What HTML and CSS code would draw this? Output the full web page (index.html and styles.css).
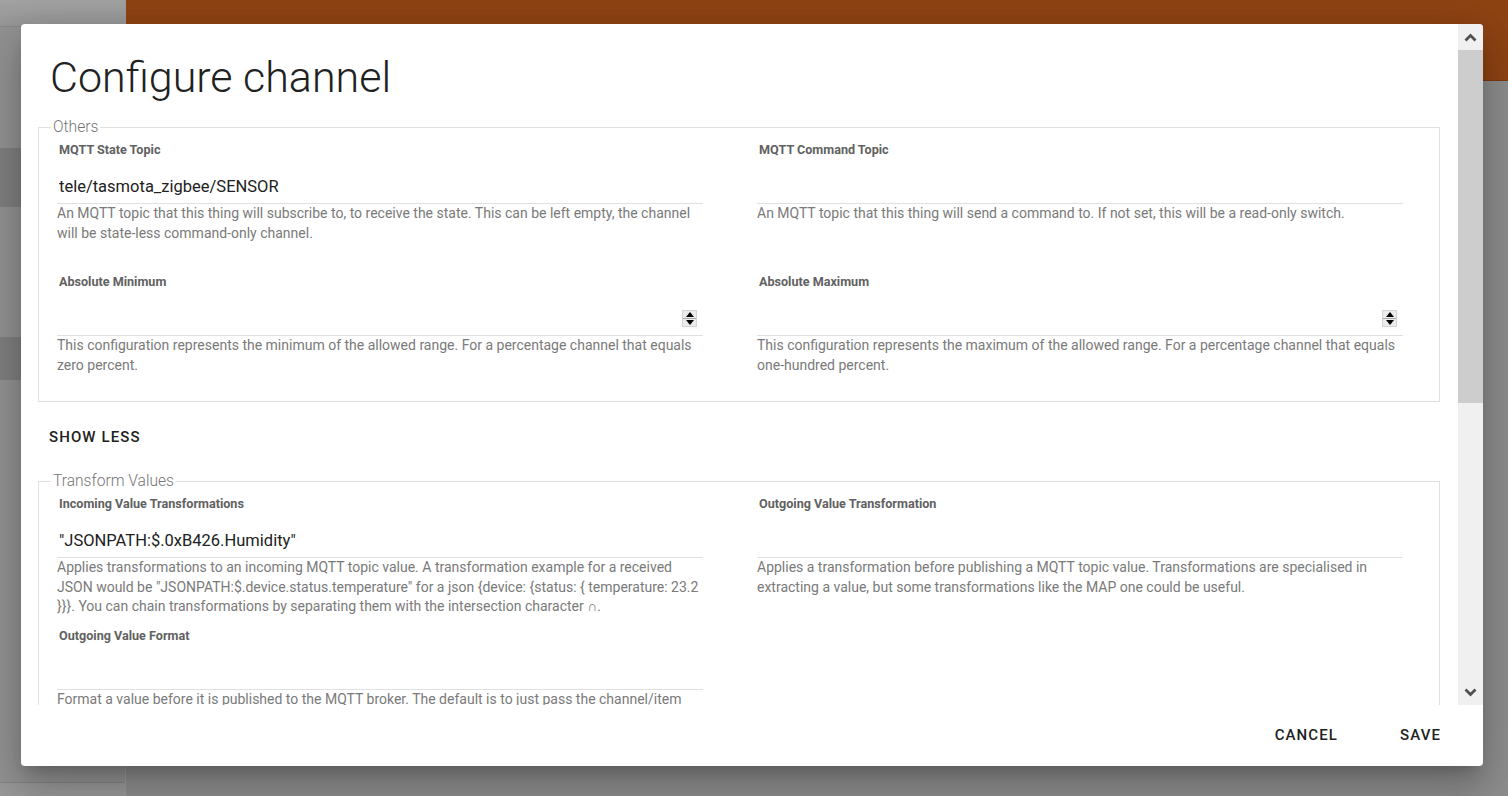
FILE: index.html
```html
<!DOCTYPE html>
<html lang="en">
<head>
    <meta charset="UTF-8">
    <title>Configure channel</title>
    <link rel="stylesheet" href="styles.css">
</head>
<body>
    <div class="page">
        <aside class="sidebar">
            <div class="side-top"></div>
            <div class="side-gap gap-1"></div>
            <div class="side-band band-1"></div>
            <div class="side-gap gap-2"></div>
            <div class="side-band band-2"></div>
            <div class="side-gap gap-3"></div>
            <div class="side-foot"></div>
        </aside>
        <main class="main">
            <div class="main-header"></div>
        </main>
    </div>

    <div class="dialog">
        <div class="dialog-body">
            <div class="dialog-content">
                <h1 class="dialog-title">Configure channel</h1>

                <fieldset class="group">
                    <legend>Others</legend>
                    <div class="fields">
                        <div class="field">
                            <label class="field-label">MQTT State Topic</label>
                            <div class="input-wrap">
                                <input class="field-input" type="text" value="tele/tasmota_zigbee/SENSOR">
                            </div>
                            <div class="field-hint">An MQTT topic that this thing will subscribe to, to receive the state. This can be left empty, the channel will be state-less command-only channel.</div>
                        </div>
                        <div class="field">
                            <label class="field-label">MQTT Command Topic</label>
                            <div class="input-wrap">
                                <input class="field-input" type="text" value="">
                            </div>
                            <div class="field-hint">An MQTT topic that this thing will send a command to. If not set, this will be a read-only switch.</div>
                        </div>
                        <div class="field">
                            <label class="field-label">Absolute Minimum</label>
                            <div class="input-wrap">
                                <input class="field-input" type="text" value="">
                                <span class="spinner"><span class="spin-up"></span><span class="spin-down"></span></span>
                            </div>
                            <div class="field-hint">This configuration represents the minimum of the allowed range. For a percentage channel that equals zero percent.</div>
                        </div>
                        <div class="field">
                            <label class="field-label">Absolute Maximum</label>
                            <div class="input-wrap">
                                <input class="field-input" type="text" value="">
                                <span class="spinner"><span class="spin-up"></span><span class="spin-down"></span></span>
                            </div>
                            <div class="field-hint">This configuration represents the maximum of the allowed range. For a percentage channel that equals one-hundred percent.</div>
                        </div>
                    </div>
                </fieldset>

                <button class="show-less">SHOW LESS</button>

                <fieldset class="group">
                    <legend>Transform Values</legend>
                    <div class="fields">
                        <div class="field">
                            <label class="field-label">Incoming Value Transformations</label>
                            <div class="input-wrap">
                                <input class="field-input" type="text" value="&quot;JSONPATH:$.0xB426.Humidity&quot;">
                            </div>
                            <div class="field-hint">Applies transformations to an incoming MQTT topic value. A transformation example for a received JSON would be "JSONPATH:$.device.status.temperature" for a json {device: {status: { temperature: 23.2 }}}. You can chain transformations by separating them with the intersection character ∩.</div>
                        </div>
                        <div class="field">
                            <label class="field-label">Outgoing Value Transformation</label>
                            <div class="input-wrap">
                                <input class="field-input" type="text" value="">
                            </div>
                            <div class="field-hint">Applies a transformation before publishing a MQTT topic value. Transformations are specialised in extracting a value, but some transformations like the MAP one could be useful.</div>
                        </div>
                        <div class="field">
                            <label class="field-label">Outgoing Value Format</label>
                            <div class="input-wrap">
                                <input class="field-input" type="text" value="">
                            </div>
                            <div class="field-hint">Format a value before it is published to the MQTT broker. The default is to just pass the channel/item state. If you want to apply a prefix, say "MYCOLOR,", you would use "MYCOLOR,%s".</div>
                        </div>
                    </div>
                </fieldset>
            </div>

            <div class="scrollbar">
                <div class="sb-button">
                    <svg width="13" height="9" viewBox="0 0 13 9"><polyline points="1.5,7.5 6.5,2.5 11.5,7.5" fill="none" stroke="#505050" stroke-width="2.8"/></svg>
                </div>
                <div class="sb-track"><div class="sb-thumb"></div></div>
                <div class="sb-button">
                    <svg width="13" height="9" viewBox="0 0 13 9"><polyline points="1.5,1.5 6.5,6.5 11.5,1.5" fill="none" stroke="#505050" stroke-width="2.8"/></svg>
                </div>
            </div>
        </div>

        <div class="dialog-actions">
            <button class="action-button">CANCEL</button>
            <button class="action-button">SAVE</button>
        </div>
    </div>
</body>
</html>
```

FILE: styles.css
```css
body {
    margin: 0;
    padding: 0;
    height: 796px;
    overflow: hidden;
    background-color: #8e8e8e;
    font-family: Roboto, "Noto Sans", Arial, sans-serif;
}
.page {
    display: flex;
    height: 796px;
}
.sidebar {
    width: 125px;
    display: flex;
    flex-direction: column;
    background-color: #939393;
    border-right: 1px solid #9c9c9c;
}
.side-top {
    height: 26px;
    background: linear-gradient(#a3a3a3, #979797);
    border-bottom: 1px solid #8a8a8a;
}
.gap-1 { height: 121px; }
.gap-2 { height: 130px; }
.gap-3 { flex-grow: 1; }
.band-1 { height: 59px; background-color: #808080; }
.band-2 { height: 43px; background-color: #808080; }
.side-foot {
    height: 13px;
    border-top: 1px solid #858585;
    background-color: #999;
}
.main {
    flex-grow: 1;
    background-color: #8e8e8e;
}
.main-header {
    height: 80px;
    background-color: #8f4313;
    border-bottom: 1px solid #7d3a10;
}

/* dialog */
.dialog {
    position: absolute;
    left: 21px;
    top: 24px;
    width: 1462px;
    height: 742px;
    background-color: #fff;
    border-radius: 4px;
    overflow: hidden;
    display: flex;
    flex-direction: column;
    box-shadow: 0 11px 15px -7px rgba(0, 0, 0, 0.2), 0 24px 38px 3px rgba(0, 0, 0, 0.14), 0 9px 46px 8px rgba(0, 0, 0, 0.12);
}
.dialog-body {
    flex-grow: 1;
    display: flex;
    min-height: 0;
}
.dialog-content {
    flex-grow: 1;
    min-width: 0;
    overflow: hidden;
    padding: 27px 18px 0 17px;
}
.dialog-title {
    margin: 0 0 0 12px;
    font-size: 43px;
    line-height: 52px;
    font-weight: 300;
    color: #212121;
}
.group {
    margin: 15px 0 0 0;
    padding: 6px 0 7px 0;
    border: 1px solid #e0e0e0;
    min-width: 0;
}
.group legend {
    margin-left: 12px;
    padding: 0 2px;
    font-size: 15.6px;
    line-height: 18px;
    font-weight: 300;
    color: #757575;
}
.fields {
    display: grid;
    grid-template-columns: 1fr 1fr;
    row-gap: 12px;
}
.field {
    min-width: 0;
    padding: 0 36px 0 18px;
}
.field-label {
    display: block;
    padding-left: 2px;
    margin-bottom: 15px;
    font-size: 12.6px;
    line-height: 16px;
    font-weight: bold;
    color: #616161;
}
.input-wrap {
    display: flex;
    align-items: center;
    height: 31px;
    padding-bottom: 3px;
    box-sizing: border-box;
    border-bottom: 1px solid #e0e0e0;
}
.field-input {
    flex-grow: 1;
    min-width: 0;
    height: 27px;
    padding: 0 2px;
    border: none;
    outline: none;
    background: transparent;
    font-family: inherit;
    font-size: 16.5px;
    color: #212121;
}
.spinner {
    width: 15px;
    height: 17px;
    margin: 0 6px 1px 0;
    display: flex;
    flex-direction: column;
    box-sizing: border-box;
    border: 1px solid #d4d4d4;
    background-color: #ececec;
}
.spin-up,
.spin-down {
    flex-grow: 1;
    display: flex;
    justify-content: center;
    align-items: center;
}
.spin-up { border-bottom: 1px solid #a8a8a8; }
.spin-up::after {
    content: "";
    border-left: 4px solid transparent;
    border-right: 4px solid transparent;
    border-bottom: 5px solid #000;
}
.spin-down::after {
    content: "";
    border-left: 4px solid transparent;
    border-right: 4px solid transparent;
    border-top: 5px solid #000;
}
.field-hint {
    height: 58px;
    font-size: 14px;
    line-height: 19.5px;
    color: #7a7a7a;
}
.show-less {
    display: block;
    height: 36px;
    margin: 17px 0;
    padding: 0 11px;
    border: none;
    background: none;
    font-family: inherit;
    font-size: 15px;
    font-weight: 500;
    letter-spacing: 1.1px;
    color: #212121;
}

/* scrollbar */
.scrollbar {
    flex-shrink: 0;
    width: 25px;
    display: flex;
    flex-direction: column;
    background-color: #f0f0f0;
}
.sb-button {
    height: 26px;
    display: flex;
    justify-content: center;
    align-items: center;
}
.sb-track {
    flex-grow: 1;
}
.sb-thumb {
    height: 353px;
    background-color: #cdcdcd;
}

/* footer */
.dialog-actions {
    height: 63px;
    display: flex;
    justify-content: flex-end;
    align-items: center;
    gap: 30px;
    padding: 0 26px 2px 0;
}
.action-button {
    height: 36px;
    padding: 0 16px;
    border: none;
    background: none;
    font-family: inherit;
    font-size: 15px;
    font-weight: 500;
    letter-spacing: 1.1px;
    color: #212121;
}
```
